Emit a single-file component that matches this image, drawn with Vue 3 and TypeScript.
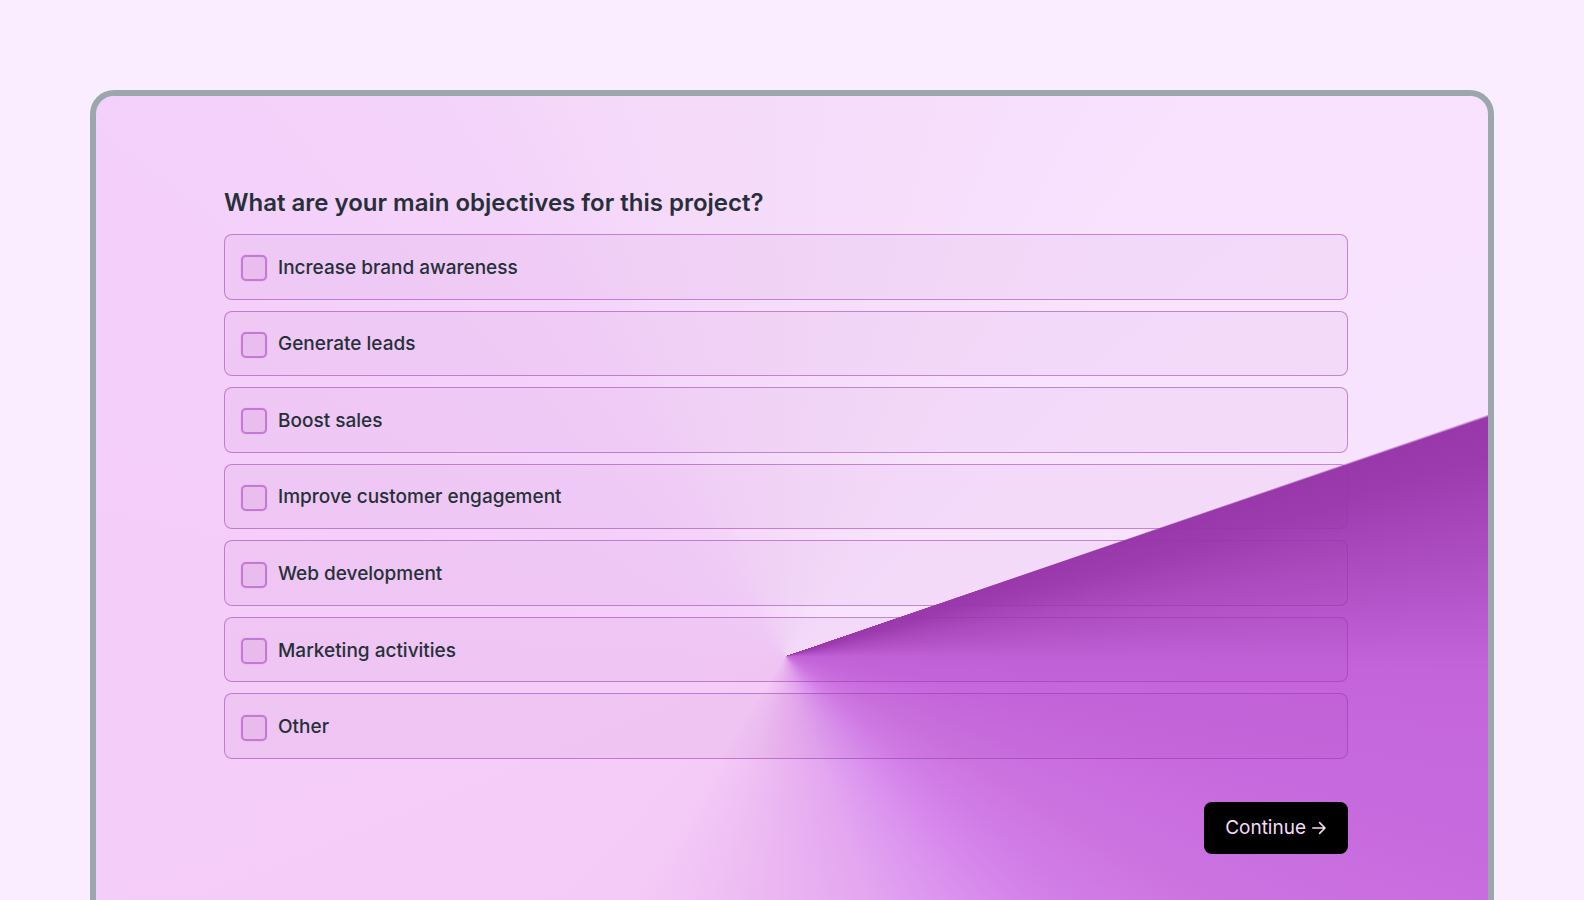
<script setup lang="ts">
import { ref } from 'vue'

interface Objective {
  id: string
  label: string
}

const objectives: Objective[] = [
  { id: 'brand', label: 'Increase brand awareness' },
  { id: 'leads', label: 'Generate leads' },
  { id: 'sales', label: 'Boost sales' },
  { id: 'engagement', label: 'Improve customer engagement' },
  { id: 'web', label: 'Web development' },
  { id: 'marketing', label: 'Marketing activities' },
  { id: 'other', label: 'Other' },
]

const selected = ref<string[]>([])
</script>

<template>
  <main class="page">
    <form class="panel" @submit.prevent>
      <fieldset class="question">
        <legend class="title">What are your main objectives for this project?</legend>
        <div class="options">
          <label v-for="item in objectives" :key="item.id" class="option" :for="item.id">
            <input :id="item.id" v-model="selected" class="box" type="checkbox" :value="item.id" />
            <span class="text">{{ item.label }}</span>
          </label>
        </div>
      </fieldset>
      <div class="actions">
        <button class="continue" type="submit">
          Continue
          <svg class="arrow" viewBox="0 0 14 14" aria-hidden="true">
            <path d="M0.8 7H13M7.6 1.6L13 7L7.6 12.4" />
          </svg>
        </button>
      </div>
    </form>
  </main>
</template>

<style>
body {
  margin: 0;
  background: #faedff;
}
</style>

<style scoped>
.page {
  box-sizing: border-box;
  display: flex;
  height: 100vh;
  padding: 90px 90px 0;
  overflow: hidden;
  background: #faedff;
  color: #263038;
  font-family: Inter, "Liberation Sans", sans-serif;
}

.panel {
  box-sizing: border-box;
  flex: 1;
  padding: 91px 140px 46px 128px;
  border: 6px solid #9aa8ac;
  border-bottom: 0;
  border-radius: 24px 24px 0 0;
  background: conic-gradient(
    from 71.2deg at 690px 560px,
    #9838ab 0deg,
    #9b3bae 3deg,
    #c364db 20deg,
    #c86bdf 36deg,
    #cd74e1 50deg,
    #d380e8 62deg,
    #db93ef 75deg,
    #e3a6f0 90deg,
    #e9b2f1 106deg,
    #eebef3 122deg,
    #f4cbf7 142deg,
    #f4cdf8 200deg,
    #f4d1fa 240deg,
    #f4d3fa 256deg,
    #f5d9fa 272deg,
    #f6defb 300deg,
    #f8e2fe 330deg,
    #f8e3fe 359.8deg,
    #9838ab 360deg
  ) padding-box;
}

.question {
  min-width: 0;
  margin: 0;
  padding: 0;
  border: 0;
}

.title {
  padding: 0;
  margin-bottom: 15px;
  font-size: 24px;
  font-weight: 600;
  line-height: 32px;
}

.options {
  display: grid;
  grid-auto-rows: 1fr;
  gap: 11px;
  min-height: 525px;
}

.option {
  display: flex;
  align-items: center;
  gap: 11px;
  padding: 0 16px;
  border: 1px solid rgba(154, 50, 174, 0.54);
  border-radius: 8px;
  background: rgba(154, 58, 150, 0.05) padding-box;
  cursor: pointer;
}

.box {
  box-sizing: border-box;
  appearance: none;
  width: 26px;
  height: 26px;
  margin: 3px 0 0;
  border: 2px solid #c47ad2;
  border-radius: 5px;
  background: rgba(154, 58, 174, 0.07);
  box-shadow: 0 0 1px #c47ad2;
  cursor: pointer;
}

.box:checked {
  background: #c47ad2;
}

.text {
  padding-top: 2px;
  font-size: 19px;
  font-weight: 500;
  line-height: 24px;
}

.actions {
  display: flex;
  justify-content: flex-end;
  margin-top: 43px;
}

.continue {
  display: flex;
  align-items: center;
  gap: 6px;
  height: 52px;
  padding: 0 22px 0 21px;
  border: 0;
  border-radius: 8px;
  background: #000;
  color: #f5dcfb;
  font: 400 19px/24px Inter, "Liberation Sans", sans-serif;
  cursor: pointer;
}

.arrow {
  width: 14px;
  height: 14px;
  fill: none;
  stroke: currentColor;
  stroke-width: 1.6;
  stroke-linecap: round;
  stroke-linejoin: round;
}
</style>
